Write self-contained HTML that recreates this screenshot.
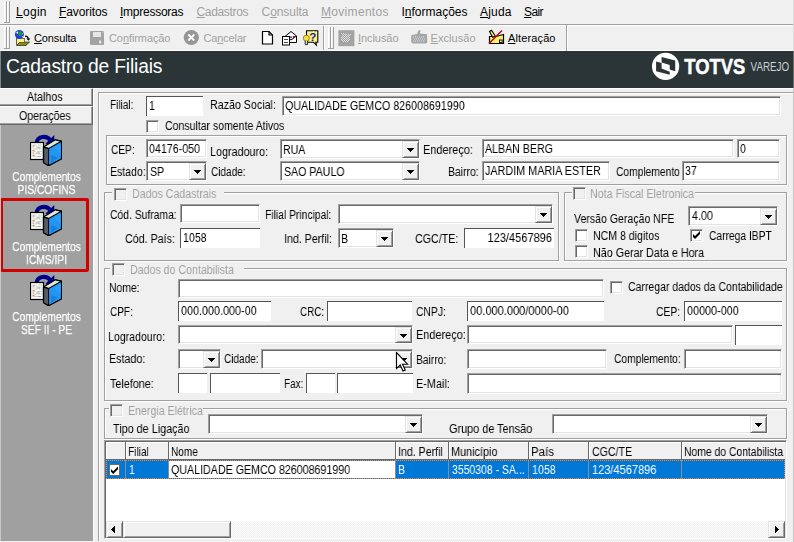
<!DOCTYPE html>
<html><head><meta charset="utf-8"><title>Cadastro de Filiais</title><style>
html,body{margin:0;padding:0}
body{width:794px;height:542px;position:relative;overflow:hidden;background:#f0f0f0;font-family:"Liberation Sans",sans-serif;font-size:11px}
.lbl,.gc,.gh,.sl,.sbtn span{will-change:transform}
.lbl{position:absolute;white-space:nowrap;line-height:14px;font-size:12.5px;display:inline-block;transform-origin:left center;transform:scaleX(0.85)}
.tbl{position:absolute;white-space:nowrap;line-height:14px;font-size:11px}
.mn{position:absolute;white-space:nowrap;line-height:15px;font-size:12px}
.ttl{position:absolute;white-space:nowrap;color:#fff;font-size:19.3px;line-height:24px}
.inA{position:absolute;box-sizing:border-box;background:#fff;border:1px solid;border-color:#a0a0a0 #fff #fff #a0a0a0;box-shadow:inset 1px 1px 0 #696969,inset -1px -1px 0 #e3e3e3}
.inB{position:absolute;background:#fff;border-top:1px solid #555;border-left:1px solid #555}
.cbtn{position:absolute;background:#f0f0f0;border:1px solid;border-color:#e3e3e3 #696969 #696969 #e3e3e3;box-shadow:inset 1px 1px 0 #fff,inset -1px -1px 0 #a0a0a0}
.cbtn i{position:absolute;left:4px;top:6px;width:7px;height:4px;background:linear-gradient(#000,#000) 0 0/7px 1px no-repeat,linear-gradient(#000,#000) 1px 1px/5px 1px no-repeat,linear-gradient(#000,#000) 2px 2px/3px 1px no-repeat,linear-gradient(#000,#000) 3px 3px/1px 1px no-repeat}
.chk{position:absolute;box-sizing:border-box;width:13px;height:13px;border:1px solid;border-color:#a0a0a0 #fff #fff #a0a0a0;box-shadow:inset 1px 1px 0 #696969,inset -1px -1px 0 #e3e3e3}
.grp{position:absolute;border:1px solid #a0a0a0;box-shadow:1px 1px 0 #fff, inset 1px 1px 0 #fff}
.sbtn{position:absolute;background:#f0f0f0;border:1px solid;border-color:#fff #696969 #696969 #fff;box-shadow:inset -1px -1px 0 #a0a0a0;text-align:center;line-height:17px;font-size:11px}
.sbtn span{position:relative;top:0px}
.gh{position:absolute;top:442px;height:18px;box-sizing:border-box;background:#f0f0f0;border-bottom:1px solid #696969;box-shadow:inset 1px 1px 0 #fff}
.gs{position:absolute;top:460px;width:1px;height:20px;background:#9a9a9a}
.gc{position:absolute;top:463px;line-height:14px;color:#fff;font-size:11px;white-space:nowrap}
.sb{position:absolute;box-sizing:border-box;background:#f0f0f0;border:1px solid;border-color:#e3e3e3 #696969 #696969 #e3e3e3;box-shadow:inset 1px 1px 0 #fff,inset -1px -1px 0 #a0a0a0}
.sl{-webkit-text-stroke:0.25px #fff;position:absolute;left:0;width:93px;text-align:center;color:#fff;font-size:12.5px;line-height:13px;white-space:nowrap;transform:scaleX(0.817);transform-origin:46.7px center}
#l1{letter-spacing:0.281px}#l2{letter-spacing:-0.109px}#l3{letter-spacing:-0.253px}#l4{letter-spacing:-0.338px}#l5{letter-spacing:-0.056px}#l6{letter-spacing:0.311px}#l7{letter-spacing:-0.006px}#l8{letter-spacing:0.199px}#l9{letter-spacing:-0.620px}#l10{letter-spacing:-0.134px}#l11{letter-spacing:-0.087px}#l12{letter-spacing:-0.147px}#l13{letter-spacing:-0.069px}#l14{letter-spacing:0.051px}#l15{letter-spacing:0.127px}#ttl{letter-spacing:-0.177px}#l16{transform:scaleX(0.8524)}#l17{transform:scaleX(0.8443)}#l18{transform:scaleX(0.8000)}#l20{transform:scaleX(0.8532)}#l21{transform:scaleX(0.8562)}#l22{transform:scaleX(0.8415)}#l23{transform:scaleX(0.8103)}#l24{transform:scaleX(0.8550)}#l25{transform:scaleX(0.8429)}#l27{transform:scaleX(0.8612)}#l28{transform:scaleX(0.8023)}#l31{transform:scaleX(0.8772)}#l32{transform:scaleX(0.8324)}#l34{transform:scaleX(0.8642)}#l36{transform:scaleX(0.8205)}#l38{transform:scaleX(0.8505)}#l39{transform:scaleX(0.8272)}#l40{transform:scaleX(0.8534)}#l42{transform:scaleX(0.8235)}#l43{transform:scaleX(0.8518)}#l45{transform:scaleX(0.8529)}#l46{transform:scaleX(0.8836)}#l47{transform:scaleX(0.8557)}#l48{transform:scaleX(0.8445)}#l49{transform:scaleX(0.8542)}#l50{transform:scaleX(0.8468)}#l51{transform:scaleX(0.8211)}#l52{transform:scaleX(0.8597)}#l53{transform:scaleX(0.8500)}#l54{transform:scaleX(0.8297)}#l55{transform:scaleX(0.8397)}#l56{transform:scaleX(0.8036)}#l57{transform:scaleX(0.8636)}#l58{transform:scaleX(0.7903)}#l59{transform:scaleX(0.8250)}#l60{transform:scaleX(0.8839)}#l61{transform:scaleX(0.8276)}#l62{transform:scaleX(0.8667)}#l63{transform:scaleX(0.8463)}#l64{transform:scaleX(0.8754)}#l65{transform:scaleX(0.8571)}#l66{transform:scaleX(0.8023)}#l67{transform:scaleX(0.8216)}#l68{transform:scaleX(0.8210)}#l69{transform:scaleX(0.8627)}#l70{transform:scaleX(0.8000)}#l71{transform:scaleX(0.8692)}#l72{transform:scaleX(0.8489)}#l73{transform:scaleX(0.8652)}#l74{transform:scaleX(0.8698)}#l75{transform:scaleX(0.8077)}#l76{transform:scaleX(0.8030)}#l77{transform:scaleX(0.8491)}#l78{transform:scaleX(0.8704)}#l79{transform:scaleX(0.9200)}#l80{transform:scaleX(0.8468)}#l81{transform:scaleX(0.8292)}#l83{transform:scaleX(0.8538)}#l85{transform:scaleX(0.8368)}#l86{transform:scaleX(0.8571)}#l87{transform:scaleX(0.8836)}</style></head><body>
<div style="position:absolute;left:0px;top:0px;width:794px;height:24px;background:#f0f0f0"></div>
<div style="position:absolute;left:0px;top:24px;width:793px;height:1px;background:#a0a0a0"></div>
<div style="position:absolute;left:0px;top:25px;width:794px;height:26px;background:#f0f0f0"></div>
<div style="position:absolute;left:0px;top:25px;width:793px;height:1px;background:#fff"></div>
<div style="position:absolute;left:0px;top:50px;width:793px;height:1px;background:#fcfcfc"></div>
<div style="position:absolute;left:4px;top:1px;width:1px;height:22px;background:#fff"></div>
<div style="position:absolute;left:6px;top:1px;width:1px;height:22px;background:#a0a0a0"></div>
<div style="position:absolute;left:4px;top:1px;width:2px;height:1px;background:#fff"></div>
<div style="position:absolute;left:4px;top:22px;width:3px;height:1px;background:#a0a0a0"></div>
<div style="position:absolute;left:7px;top:1px;width:1px;height:22px;background:#fff"></div>
<div style="position:absolute;left:9px;top:1px;width:1px;height:22px;background:#a0a0a0"></div>
<div style="position:absolute;left:7px;top:1px;width:2px;height:1px;background:#fff"></div>
<div style="position:absolute;left:7px;top:22px;width:3px;height:1px;background:#a0a0a0"></div>
<div style="position:absolute;left:4px;top:27px;width:1px;height:22px;background:#fff"></div>
<div style="position:absolute;left:6px;top:27px;width:1px;height:22px;background:#a0a0a0"></div>
<div style="position:absolute;left:4px;top:27px;width:2px;height:1px;background:#fff"></div>
<div style="position:absolute;left:4px;top:48px;width:3px;height:1px;background:#a0a0a0"></div>
<div style="position:absolute;left:7px;top:27px;width:1px;height:22px;background:#fff"></div>
<div style="position:absolute;left:9px;top:27px;width:1px;height:22px;background:#a0a0a0"></div>
<div style="position:absolute;left:7px;top:27px;width:2px;height:1px;background:#fff"></div>
<div style="position:absolute;left:7px;top:48px;width:3px;height:1px;background:#a0a0a0"></div>
<span id="l1" class="mn" style="left:16px;top:5px;color:#000"><u>L</u>ogin</span>
<span id="l2" class="mn" style="left:59px;top:5px;color:#000"><u>F</u>avoritos</span>
<span id="l3" class="mn" style="left:120px;top:5px;color:#000"><u>I</u>mpressoras</span>
<span id="l4" class="mn" style="left:196.5px;top:5px;color:#a0a0a0"><u>C</u>adastros</span>
<span id="l5" class="mn" style="left:261.5px;top:5px;color:#a0a0a0">C<u>o</u>nsulta</span>
<span id="l6" class="mn" style="left:321px;top:5px;color:#a0a0a0"><u>M</u>ovimentos</span>
<span id="l7" class="mn" style="left:401.5px;top:5px;color:#000">I<u>n</u>formações</span>
<span id="l8" class="mn" style="left:480px;top:5px;color:#000"><u>A</u>juda</span>
<span id="l9" class="mn" style="left:524px;top:5px;color:#000"><u>S</u>air</span>
<span id="l10" class="tbl" style="left:34px;top:30.5px;color:#000"><u>C</u>onsulta</span>
<span id="l11" class="tbl" style="left:109px;top:30.5px;color:#a0a0a0">Co<u>n</u>firmação</span>
<span id="l12" class="tbl" style="left:203.5px;top:30.5px;color:#a0a0a0">Ca<u>n</u>celar</span>
<span id="l13" class="tbl" style="left:358px;top:30.5px;color:#a0a0a0"><u>I</u>nclusão</span>
<span id="l14" class="tbl" style="left:430.5px;top:30.5px;color:#a0a0a0"><u>E</u>xclusão</span>
<span id="l15" class="tbl" style="left:508px;top:30.5px;color:#000"><u>A</u>lteração</span>
<div style="position:absolute;left:323px;top:26px;width:1px;height:24px;background:#a0a0a0"></div>
<div style="position:absolute;left:324px;top:26px;width:1px;height:24px;background:#fff"></div>
<div style="position:absolute;left:328px;top:27px;width:1px;height:22px;background:#fff"></div>
<div style="position:absolute;left:330px;top:27px;width:1px;height:22px;background:#a0a0a0"></div>
<div style="position:absolute;left:328px;top:27px;width:2px;height:1px;background:#fff"></div>
<div style="position:absolute;left:328px;top:48px;width:3px;height:1px;background:#a0a0a0"></div>
<div style="position:absolute;left:331px;top:27px;width:1px;height:22px;background:#fff"></div>
<div style="position:absolute;left:333px;top:27px;width:1px;height:22px;background:#a0a0a0"></div>
<div style="position:absolute;left:331px;top:27px;width:2px;height:1px;background:#fff"></div>
<div style="position:absolute;left:331px;top:48px;width:3px;height:1px;background:#a0a0a0"></div>
<div style="position:absolute;left:566px;top:25px;width:1px;height:26px;background:#a0a0a0"></div>
<div style="position:absolute;left:567px;top:26px;width:1px;height:24px;background:#fff"></div>
<svg style="position:absolute;left:0;top:25px" width="794" height="25" viewBox="0 25 794 25" shape-rendering="auto">
<!-- consulta: globe + folder -->
<g>
<path d="M16.4 38 h8.2 v3.8 h5.6 l-4.2 3.9 h-9.6z" fill="#000"/>
<path d="M17 38.4 h7.2 v3.6 h-4.2 l-3 2.6z" fill="#fbf37a"/>
<path d="M16.6 45.2 L20.2 42.3 L29.2 42.3 L25.8 45.2 Z" fill="#8a8a1c"/>
<circle cx="19.4" cy="34.5" r="4.5" fill="#1f3fe0"/>
<path d="M18.6 31.4 q2.6 -0.8 3.6 1.2 q0.6 2 -1 3.2 q-1.6 1 -2.4 -0.6 q-1 -1.6 -0.2 -3.8z" fill="#1a9a2a"/>
<path d="M16.2 32.6 l1.2 -1.4 l0.8 1.2 l-0.8 1.6z M21.8 36.6 l1.4 -0.6 l-0.2 1.6z" fill="#fff"/>
<path d="M22.2 33.2 l0.9 0.6 l-0.7 0.9z" fill="#fff"/>
<path d="M25 36.2 q3 0 3.3 2.6" fill="none" stroke="#000" stroke-width="1.2"/>
<path d="M26.4 38.4 h4 l-2 2.4z" fill="#000"/>
</g>
<!-- floppy disabled -->
<g>
<rect x="90" y="31" width="14" height="14" rx="1" fill="#a3a3a3"/>
<rect x="93" y="32" width="8" height="5" fill="#e6e6e6"/>
<rect x="99" y="40.5" width="2.2" height="3" fill="#e6e6e6"/>
<rect x="102.6" y="31.6" width="1" height="1" fill="#e6e6e6"/>
</g>
<!-- cancel -->
<g>
<circle cx="191.3" cy="37.5" r="7.6" fill="#969696"/>
<path d="M188.3 34.5 l6 6 M194.3 34.5 l-6 6" stroke="#fff" stroke-width="1.8" fill="none"/>
</g>
<!-- new doc -->
<path d="M262.5 31.5 h6.5 l3.5 3.5 v9 h-10z" fill="#fff" stroke="#000" stroke-width="1.2"/>
<path d="M269 31.5 v3.5 h3.5" fill="none" stroke="#000" stroke-width="1.2"/>
<!-- mail -->
<g stroke="#000" stroke-width="1" >
<path d="M285.5 36 l5.5 -4.5 l5.5 4.5 v6.5 h-11z" fill="#fff"/>
<path d="M285.5 36 l5.5 4 l5.5 -4" fill="#e8e8e8"/>
<rect x="282.5" y="36.5" width="7" height="8.5" fill="#fff"/>
<path d="M284 39.5 h4 M284 42.5 h4" stroke-width="0.7"/>
</g>
<rect x="293" y="36" width="2" height="2" fill="#c00020"/>
<rect x="290" y="36.6" width="2" height="1.2" fill="#2030a0"/>
<!-- help -->
<g>
<path d="M306.5 30.7 h11.3 v11.5 h-2 l0.6 3 l-3 -3 h-6.9z" fill="#fdf26a" stroke="#000" stroke-width="1.1"/>
<path d="M309.2 32.5 h1 M313 31.8 h1 M315.5 39.5 h1 M310 40.5 h1 M316 33 h1" stroke="#fff" stroke-width="1"/>
<text x="309.3" y="41" font-family="Liberation Sans, sans-serif" font-weight="bold" font-size="11.5" fill="#1520c0">?</text>
<circle cx="306.3" cy="38.2" r="3" fill="#f0e040" stroke="#6a6200" stroke-width="0.7"/>
<path d="M305.2 41 v3.6 h2.4 v-3.6" fill="#d8d8d8" stroke="#000" stroke-width="0.8"/>
</g>
<!-- inclusao disabled -->
<g>
<defs><pattern id="dth" width="2" height="2" patternUnits="userSpaceOnUse"><rect width="2" height="2" fill="#a3a3a3"/><rect width="1" height="1" fill="#dcdcdc"/><rect x="1" y="1" width="1" height="1" fill="#dcdcdc"/></pattern></defs>
<rect x="338.4" y="30.2" width="16" height="16" fill="#a3a3a3"/>
<path d="M341 33 h4 l1 1 h5 v2 h-1 v5 h-2 v1 h-6 v-2 h-1 v-4 h1z" fill="url(#dth)"/>
</g>
<!-- exclusao disabled -->
<g>
<path d="M412 35 l5 -1 l1.5 -3.5 l2 -0.5 l-0.5 3.5 l7 0.8 l0.3 7.7 q-0.2 1.4 -1.6 1.4 h-12.5 q-2 0 -2 -2 v-4.5 q0 -1.6 0.8 -1.9z" fill="#a6a6a6"/>
<path d="M413 37 h1 m1 0 h1 m1 0 h1 m1 0 h1 m1 0 h1 m1 0 h1 M414 39 h1 m1 0 h1 m1 0 h1 m1 0 h1 m1 0 h1 m1 0 h1 M413 41 h1 m1 0 h1 m1 0 h1 m1 0 h1 m1 0 h1 m1 0 h1" stroke="#e0e0e0" stroke-width="1" fill="none"/>
</g>
<!-- alteracao -->
<g>
<path d="M489.5 36.5 l6.5 0 l7.5 -2 v9 h-14z" fill="#fdf26a" stroke="#000" stroke-width="1.2"/>
<path d="M489.5 31.5 l2 -1.2 l4 6 l-3 0.7z" fill="#fdf26a" stroke="#000" stroke-width="1.1"/>
<path d="M489 43.5 L502 30.5" stroke="#b01020" stroke-width="1.6"/>
<rect x="499.5" y="40" width="2.6" height="2.6" fill="#fff" stroke="#000" stroke-width="0.9"/>
</g>
</svg>

<div style="position:absolute;left:0px;top:51px;width:794px;height:37px;background:#2b3538"></div>
<span id="ttl" class="ttl" style="left:6px;top:55px">Cadastro de Filiais</span>
<svg style="position:absolute;left:640px;top:50px" width="153" height="38" viewBox="640 50 153 38">
<circle cx="665.6" cy="66.4" r="13.6" fill="#fff"/>
<path d="M661.6 57.05 L675.2 60.6 L675.2 71.2 L669.7 69.6 L669.7 65.1 L661.6 62.6 Z" fill="#2b3538"/>
<path d="M656.1 61.6 L661.6 62.9 L661.6 68.6 L669.7 71.7 L669.7 74.7 L656.1 71.2 Z" fill="#2b3538"/>
<text x="684.3" y="73.8" font-family="Liberation Sans, sans-serif" font-weight="bold" font-size="22.5" fill="#fff" stroke="#fff" stroke-width="0.5" textLength="61" lengthAdjust="spacingAndGlyphs">TOTVS</text>
<text x="750.6" y="70.7" font-family="Liberation Sans, sans-serif" font-size="12.6" fill="#ccd1d3" textLength="38.5" lengthAdjust="spacingAndGlyphs">VAREJO</text>
</svg>

<div style="position:absolute;left:0px;top:88px;width:794px;height:454px;background:#f0f0f0"></div>
<div style="position:absolute;left:0px;top:125px;width:93px;height:416px;background:#a0a0a0"></div>
<div style="position:absolute;left:0px;top:88px;width:794px;height:1px;background:#fff"></div>
<div style="position:absolute;left:93px;top:88px;width:1px;height:454px;background:#fff"></div>
<div style="position:absolute;left:793px;top:51px;width:1px;height:37px;background:#6a7173"></div>
<div style="position:absolute;left:793px;top:0px;width:1px;height:51px;background:#dcdcdc"></div>
<div style="position:absolute;left:793px;top:88px;width:1px;height:454px;background:#c8c8c8"></div>
<div class="sbtn" style="left:-2px;top:88px;width:93px;height:16px"></div>
<div class="sbtn" style="left:-2px;top:106px;width:93px;height:17px"></div>
<span id="l16" class="lbl" style="left:27px;top:90px;color:#000;">Atalhos</span>
<span id="l17" class="lbl" style="left:19px;top:109px;color:#000;">Operações</span>
<svg width="0" height="0" style="position:absolute"><defs>
<g id="bk">
<path d="M6.6 9.5 C6.6 1.6 17.5 0.8 21 7.4" fill="none" stroke="#00008b" stroke-width="4.2"/>
<path d="M24.3 1 L24.3 10.6 L15.3 9.8 Z" fill="#00008b"/>
<rect x="0.5" y="8.5" width="13" height="17" fill="#fbfbf4" stroke="#000" stroke-width="1.2"/>
<path d="M2.5 11 h4 M8 11 h4 M2.5 13 h2 M6 13 h6 M2.5 15 h5 M9 15 h3 M2.5 17.5 h3 M7 17.5 h5 M2.5 20 h4 M8 20 h4 M2.5 22.5 h6" stroke="#c4d6c0" stroke-width="1"/>
<path d="M2.5 12 h2 M2.5 16.5 h2 M2.5 21.5 h2 M2.5 19 h1.5" stroke="#e08080" stroke-width="1"/>
<path d="M7 14 h3 M6 19 h4 M8 22.5 h3" stroke="#a0a0e0" stroke-width="1"/>
<path d="M13.6 13.1 L25.3 5.9 L31.4 7.2 L31.4 24.9 L18.7 31.6 L13.6 28.6 Z" fill="#1e90f0" stroke="#000" stroke-width="1.5" stroke-linejoin="round"/>
<path d="M13.6 13.1 L25.3 5.9 L31.4 7.2 L18.7 14.6 Z" fill="#dfeadd" stroke="#000" stroke-width="1.1" stroke-linejoin="round"/>
<path d="M13.6 13.1 L18.7 14.6 L18.7 31.6 L13.6 28.6 Z" fill="#565c66" stroke="#000" stroke-width="1.1" stroke-linejoin="round"/>
<path d="M19.3 15 L30.8 8.4 L30.8 24.5 L19.3 30.6Z" fill="#2196f3"/>
<path d="M21 21 l7 2.5 l-7 5.5z" fill="#1878cc" opacity="0.7"/>
<path d="M24 14 l6.8 -4 v10z" fill="#2fa0ff" opacity="0.8"/>
</g></defs></svg>
<svg style="position:absolute;left:30px;top:134px" width="32" height="32"><use href="#bk"/></svg>
<div class="sl" style="top:171px">Complementos</div>
<div class="sl" style="top:184px">PIS/COFINS</div>
<div style="position:absolute;left:0px;top:198px;width:83px;height:68px;border:3px solid #d40000;border-radius:2px"></div>
<svg style="position:absolute;left:30px;top:204px" width="32" height="32"><use href="#bk"/></svg>
<div class="sl" style="top:241px">Complementos</div>
<div class="sl" style="top:254px">ICMS/IPI</div>
<svg style="position:absolute;left:30px;top:274px" width="32" height="32"><use href="#bk"/></svg>
<div class="sl" style="top:311px">Complementos</div>
<div class="sl" style="top:324px">SEF II - PE</div>

<div style="position:absolute;left:98px;top:92px;width:695px;height:450px;border-top:1px solid #a0a0a0;border-left:1px solid #a0a0a0;box-shadow:inset 1px 1px 0 #fff;box-sizing:border-box"></div>
<span id="l18" class="lbl" style="left:109.8px;top:98px;color:#000;">Filial:</span>
<div class="inB" style="left:146px;top:96px;width:56px;height:19px"></div>
<span id="l19" class="lbl" style="left:149px;top:99px;color:#000;">1</span>
<span id="l20" class="lbl" style="left:210.3px;top:98px;color:#000;">Razão Social:</span>
<div class="inA" style="left:282px;top:96px;width:499px;height:20px"></div>
<span id="l21" class="lbl" style="left:285.2px;top:99px;color:#000;">QUALIDADE GEMCO 826008691990</span>
<div class="chk" style="left:146px;top:120px;background:#fff"></div>
<span id="l22" class="lbl" style="left:164.5px;top:119px;color:#000;">Consultar somente Ativos</span>
<div class="grp" style="left:106px;top:135px;width:679px;height:48px"></div>
<span id="l23" class="lbl" style="left:110.5px;top:143px;color:#000;">CEP:</span>
<div class="inA" style="left:146px;top:139px;width:61px;height:19px"></div>
<span id="l24" class="lbl" style="left:149.2px;top:142px;color:#000;">04176-050</span>
<span id="l25" class="lbl" style="left:109.8px;top:165px;color:#000;">Estado:</span>
<div class="inA" style="left:146px;top:161px;width:61px;height:20px"></div>
<span id="l26" class="lbl" style="left:150px;top:165px;color:#000;">SP</span>
<div class="cbtn" style="left:189px;top:163px;width:15px;height:15px"><i></i></div>
<span id="l27" class="lbl" style="left:210.3px;top:145px;color:#000;">Logradouro:</span>
<span id="l28" class="lbl" style="left:211px;top:165px;color:#000;">Cidade:</span>
<div class="inA" style="left:280px;top:139px;width:140px;height:20px"></div>
<span id="l29" class="lbl" style="left:283.3px;top:143px;color:#000;">RUA</span>
<div class="cbtn" style="left:402px;top:141px;width:15px;height:15px"><i></i></div>
<div class="inA" style="left:280px;top:161px;width:140px;height:20px"></div>
<span id="l30" class="lbl" style="left:284px;top:165px;color:#000;">SAO PAULO</span>
<div class="cbtn" style="left:402px;top:163px;width:15px;height:15px"><i></i></div>
<span id="l31" class="lbl" style="left:423.0px;top:143px;color:#000;">Endereço:</span>
<span id="l32" class="lbl" style="left:448.0px;top:165px;color:#000;">Bairro:</span>
<div class="inA" style="left:482px;top:139px;width:252px;height:19px"></div>
<span id="l33" class="lbl" style="left:485.2px;top:142px;color:#000;">ALBAN BERG</span>
<div class="inA" style="left:482px;top:161px;width:128px;height:20px"></div>
<span id="l34" class="lbl" style="left:485.2px;top:164px;color:#000;">JARDIM MARIA ESTER</span>
<div class="inA" style="left:737px;top:139px;width:43px;height:19px"></div>
<span id="l35" class="lbl" style="left:740.2px;top:142px;color:#000;">0</span>
<span id="l36" class="lbl" style="left:615.5px;top:165px;color:#000;">Complemento</span>
<div class="inA" style="left:682px;top:161px;width:98px;height:20px"></div>
<span id="l37" class="lbl" style="left:685.2px;top:164px;color:#000;">37</span>
<div class="grp" style="left:104px;top:192px;width:453px;height:67px"></div>
<div style="position:absolute;left:112px;top:187px;width:112px;height:13px;background:#f0f0f0"></div>
<div class="chk" style="left:114px;top:188px;background:#f0f0f0"></div>
<span id="l38" class="lbl" style="left:131.8px;top:187px;color:#a0a0a0;">Dados Cadastrais</span>
<span id="l39" class="lbl" style="left:109.5px;top:208px;color:#000;">Cód. Suframa:</span>
<div class="inA" style="left:180px;top:204px;width:80px;height:19px"></div>
<span id="l40" class="lbl" style="left:124.5px;top:232px;color:#000;">Cód. País:</span>
<div class="inB" style="left:180px;top:228px;width:79px;height:19px"></div>
<span id="l41" class="lbl" style="left:183px;top:231px;color:#000;">1058</span>
<span id="l42" class="lbl" style="left:264.8px;top:208px;color:#000;">Filial Principal:</span>
<div class="inA" style="left:338px;top:204px;width:215px;height:20px"></div>
<div class="cbtn" style="left:535px;top:206px;width:15px;height:15px"><i></i></div>
<span id="l43" class="lbl" style="left:284.3px;top:232px;color:#000;">Ind. Perfil:</span>
<div class="inA" style="left:338px;top:228px;width:56px;height:20px"></div>
<span id="l44" class="lbl" style="left:341.3px;top:232px;color:#000;">B</span>
<div class="cbtn" style="left:376px;top:230px;width:15px;height:15px"><i></i></div>
<span id="l45" class="lbl" style="left:414.5px;top:232px;color:#000;">CGC/TE:</span>
<div class="inB" style="left:464px;top:228px;width:89px;height:19px"></div>
<span id="l46" class="lbl" style="right:242.5px;top:231px;transform-origin:right center">123/4567896</span>
<div class="grp" style="left:564px;top:192px;width:221px;height:67px"></div>
<div style="position:absolute;left:572px;top:187px;width:123px;height:13px;background:#f0f0f0"></div>
<div class="chk" style="left:573px;top:187px;background:#f0f0f0"></div>
<span id="l47" class="lbl" style="left:590.1px;top:187px;color:#a0a0a0;">Nota Fiscal Eletronica</span>
<span id="l48" class="lbl" style="left:574px;top:212px;color:#000;">Versão Geração NFE</span>
<div class="inA" style="left:688px;top:206px;width:90px;height:20px"></div>
<span id="l49" class="lbl" style="left:692px;top:209px;color:#000;">4.00</span>
<div class="cbtn" style="left:760px;top:208px;width:15px;height:15px"><i></i></div>
<div class="chk" style="left:575px;top:229px;background:#fff"></div>
<span id="l50" class="lbl" style="left:592.6px;top:229px;color:#000;">NCM 8 digitos</span>
<div class="chk" style="left:690px;top:229px;background:#fff"><svg width="9" height="9" viewBox="0 0 9 9" style="position:absolute;left:1px;top:1px"><path d="M1 3 L3 5 L8 0 L8 3 L3 8 L1 6 Z" fill="#000"/></svg></div>
<span id="l51" class="lbl" style="left:708.8px;top:229px;color:#000;">Carrega IBPT</span>
<div class="chk" style="left:575px;top:245px;background:#fff"></div>
<span id="l52" class="lbl" style="left:592.6px;top:246px;color:#000;">Não Gerar Data e Hora</span>
<div class="grp" style="left:104px;top:268px;width:681px;height:131px"></div>
<div style="position:absolute;left:110px;top:262px;width:134px;height:13px;background:#f0f0f0"></div>
<div class="chk" style="left:112px;top:263px;background:#f0f0f0"></div>
<span id="l53" class="lbl" style="left:129.8px;top:263px;color:#a0a0a0;">Dados do Contabilista</span>
<span id="l54" class="lbl" style="left:108.8px;top:281px;color:#000;">Nome:</span>
<div class="inA" style="left:178px;top:279px;width:426px;height:19px"></div>
<div class="chk" style="left:610px;top:281px;background:#fff"></div>
<span id="l55" class="lbl" style="left:628px;top:280px;color:#000;">Carregar dados da Contabilidade</span>
<span id="l56" class="lbl" style="left:109.5px;top:305px;color:#000;">CPF:</span>
<div class="inB" style="left:178px;top:301px;width:92px;height:19px"></div>
<span id="l57" class="lbl" style="left:181px;top:304px;color:#000;">000.000.000-00</span>
<span id="l58" class="lbl" style="left:299.5px;top:305px;color:#000;">CRC:</span>
<div class="inB" style="left:327px;top:301px;width:84px;height:19px"></div>
<span id="l59" class="lbl" style="left:416.3px;top:305px;color:#000;">CNPJ:</span>
<div class="inB" style="left:467px;top:301px;width:136px;height:19px"></div>
<span id="l60" class="lbl" style="left:470px;top:304px;color:#000;">00.000.000/0000-00</span>
<span id="l61" class="lbl" style="left:656px;top:305px;color:#000;">CEP:</span>
<div class="inB" style="left:684px;top:301px;width:97px;height:19px"></div>
<span id="l62" class="lbl" style="left:687px;top:304px;color:#000;">00000-000</span>
<span id="l63" class="lbl" style="left:108.3px;top:330px;color:#000;">Logradouro:</span>
<div class="inA" style="left:178px;top:325px;width:235px;height:19px"></div>
<div class="cbtn" style="left:395px;top:327px;width:15px;height:14px"><i></i></div>
<span id="l64" class="lbl" style="left:415.6px;top:328px;color:#000;">Endereço:</span>
<div class="inA" style="left:467px;top:325px;width:266px;height:19px"></div>
<div class="inB" style="left:735px;top:325px;width:46px;height:19px"></div>
<span id="l65" class="lbl" style="left:108.8px;top:352px;color:#000;">Estado:</span>
<div class="inA" style="left:178px;top:349px;width:43px;height:20px"></div>
<div class="cbtn" style="left:203px;top:351px;width:15px;height:15px"><i></i></div>
<span id="l66" class="lbl" style="left:223.5px;top:352px;color:#000;">Cidade:</span>
<div class="inA" style="left:261px;top:349px;width:152px;height:20px"></div>
<div class="cbtn" style="left:395px;top:351px;width:15px;height:15px"><i></i></div>
<span id="l67" class="lbl" style="left:415.6px;top:353px;color:#000;">Bairro:</span>
<div class="inA" style="left:467px;top:349px;width:140px;height:20px"></div>
<span id="l68" class="lbl" style="left:613.5px;top:352px;color:#000;">Complemento:</span>
<div class="inA" style="left:684px;top:349px;width:98px;height:20px"></div>
<span id="l69" class="lbl" style="left:109.5px;top:377px;color:#000;">Telefone:</span>
<div class="inB" style="left:178px;top:373px;width:28px;height:19px"></div>
<div class="inB" style="left:210px;top:373px;width:69px;height:19px"></div>
<span id="l70" class="lbl" style="left:283.8px;top:377px;color:#000;">Fax:</span>
<div class="inB" style="left:306px;top:373px;width:28px;height:19px"></div>
<div class="inB" style="left:337px;top:373px;width:75px;height:19px"></div>
<span id="l71" class="lbl" style="left:415.6px;top:377px;color:#000;">E-Mail:</span>
<div class="inA" style="left:467px;top:373px;width:315px;height:21px"></div>
<div class="grp" style="left:104px;top:408px;width:681px;height:29px"></div>
<div style="position:absolute;left:109px;top:403px;width:94px;height:13px;background:#f0f0f0"></div>
<div class="chk" style="left:110px;top:404px;background:#f0f0f0"></div>
<span id="l72" class="lbl" style="left:127.8px;top:404px;color:#a0a0a0;">Energia Elétrica</span>
<span id="l73" class="lbl" style="left:113px;top:422px;color:#000;">Tipo de Ligação</span>
<div class="inA" style="left:208px;top:414px;width:215px;height:20px"></div>
<div class="cbtn" style="left:405px;top:416px;width:15px;height:15px"><i></i></div>
<span id="l74" class="lbl" style="left:448.5px;top:422px;color:#000;">Grupo de Tensão</span>
<div class="inA" style="left:552px;top:414px;width:216px;height:20px"></div>
<div class="cbtn" style="left:750px;top:416px;width:15px;height:15px"><i></i></div>
<div style="position:absolute;left:104px;top:440px;width:683px;height:99px;background:#fff;box-sizing:border-box;border:1px solid;border-color:#a0a0a0 #fff #fff #a0a0a0;box-shadow:inset 1px 1px 0 #696969,inset -1px -1px 0 #e3e3e3"></div>
<div class="gh" style="left:106px;width:20px;border-right:1px solid #696969;"></div>
<div class="gh" style="left:126px;width:43px;border-right:1px solid #696969;"></div>
<span id="l75" class="lbl" style="left:128.0px;top:445px;color:#000;">Filial</span>
<div class="gh" style="left:169px;width:227px;border-right:1px solid #696969;"></div>
<span id="l76" class="lbl" style="left:171.0px;top:445px;color:#000;">Nome</span>
<div class="gh" style="left:396px;width:53px;border-right:1px solid #696969;"></div>
<span id="l77" class="lbl" style="left:398.0px;top:445px;color:#000;">Ind. Perfil</span>
<div class="gh" style="left:449px;width:80px;border-right:1px solid #696969;"></div>
<span id="l78" class="lbl" style="left:451.0px;top:445px;color:#000;">Município</span>
<div class="gh" style="left:529px;width:60px;border-right:1px solid #696969;"></div>
<span id="l79" class="lbl" style="left:531.0px;top:445px;color:#000;">País</span>
<div class="gh" style="left:589px;width:93px;border-right:1px solid #696969;"></div>
<span id="l80" class="lbl" style="left:591.7px;top:445px;color:#000;">CGC/TE</span>
<div class="gh" style="left:682px;width:103px;"></div>
<span id="l81" class="lbl" style="left:684.0px;top:445px;color:#000;">Nome do Contabilista</span>
<div style="position:absolute;left:106px;top:460px;width:679px;height:19px;background:#0078d7"></div>
<div style="position:absolute;left:169px;top:461px;width:226px;height:17px;background:#fff"></div>
<div style="position:absolute;left:125px;top:460px;width:1px;height:19px;background:#8c8c8c"></div>
<div style="position:absolute;left:168px;top:460px;width:1px;height:19px;background:#8c8c8c"></div>
<div style="position:absolute;left:395px;top:460px;width:1px;height:19px;background:#8c8c8c"></div>
<div style="position:absolute;left:448px;top:460px;width:1px;height:19px;background:#8c8c8c"></div>
<div style="position:absolute;left:528px;top:460px;width:1px;height:19px;background:#8c8c8c"></div>
<div style="position:absolute;left:588px;top:460px;width:1px;height:19px;background:#8c8c8c"></div>
<div style="position:absolute;left:681px;top:460px;width:1px;height:19px;background:#8c8c8c"></div>
<div style="position:absolute;left:106px;top:460px;width:679px;height:19px;box-sizing:border-box;border:1px dotted #ff8728"></div>
<div style="position:absolute;left:109px;top:464px;width:11px;height:12px;box-sizing:border-box;background:#fff;border:1px solid #6a6a6a"><svg width="9" height="10" viewBox="0 0 9 10" style="position:absolute;left:0;top:0"><path d="M1 4 L3.2 6.2 L8 1.4 L8 4.2 L3.2 9 L1 6.8 Z" fill="#000"/></svg></div>
<span id="l82" class="lbl" style="left:129px;top:463px;color:#fff;">1</span>
<span id="l83" class="lbl" style="left:171.2px;top:463px;color:#000;">QUALIDADE GEMCO 826008691990</span>
<span id="l84" class="lbl" style="left:398.3px;top:463px;color:#fff;">B</span>
<span id="l85" class="lbl" style="left:452px;top:463px;color:#fff;">3550308 - SA...</span>
<span id="l86" class="lbl" style="left:532px;top:463px;color:#fff;">1058</span>
<span id="l87" class="lbl" style="left:592px;top:463px;color:#fff;">123/4567896</span>
<div style="position:absolute;left:106px;top:521px;width:679px;height:17px;background:conic-gradient(#fff 25%,#f0f0f0 0 50%,#fff 0 75%,#f0f0f0 0) 0 0/2px 2px"></div>
<div class="sb" style="left:106px;top:521px;width:17px;height:17px"><i style="position:absolute;left:4px;top:4px;width:4px;height:7px;background:linear-gradient(#000,#000) 3px 0/1px 7px no-repeat,linear-gradient(#000,#000) 2px 1px/1px 5px no-repeat,linear-gradient(#000,#000) 1px 2px/1px 3px no-repeat,linear-gradient(#000,#000) 0 3px/1px 1px no-repeat"></i></div>
<div class="sb" style="left:123px;top:521px;width:108px;height:17px"></div>
<div class="sb" style="left:768px;top:521px;width:17px;height:17px"><i style="position:absolute;left:6px;top:4px;width:4px;height:7px;background:linear-gradient(#000,#000) 0 0/1px 7px no-repeat,linear-gradient(#000,#000) 1px 1px/1px 5px no-repeat,linear-gradient(#000,#000) 2px 2px/1px 3px no-repeat,linear-gradient(#000,#000) 3px 3px/1px 1px no-repeat"></i></div>
<div style="position:absolute;left:0px;top:541px;width:793px;height:1px;background:#f0f0f0"></div>
<div style="position:absolute;left:0px;top:51px;width:1px;height:37px;background:#7d8587"></div>
<div style="position:absolute;left:0px;top:125px;width:1px;height:416px;background:#c8c8c8"></div>
<svg style="position:absolute;left:396px;top:352px" width="13" height="20" viewBox="0 0 13 20"><path d="M0.5 0.5 L0.5 16.5 L4.2 13 L7 19 L9.3 18 L6.5 12.2 L11.5 12.2 Z" fill="#fff" stroke="#000" stroke-width="1.1"/></svg>
</body></html>
